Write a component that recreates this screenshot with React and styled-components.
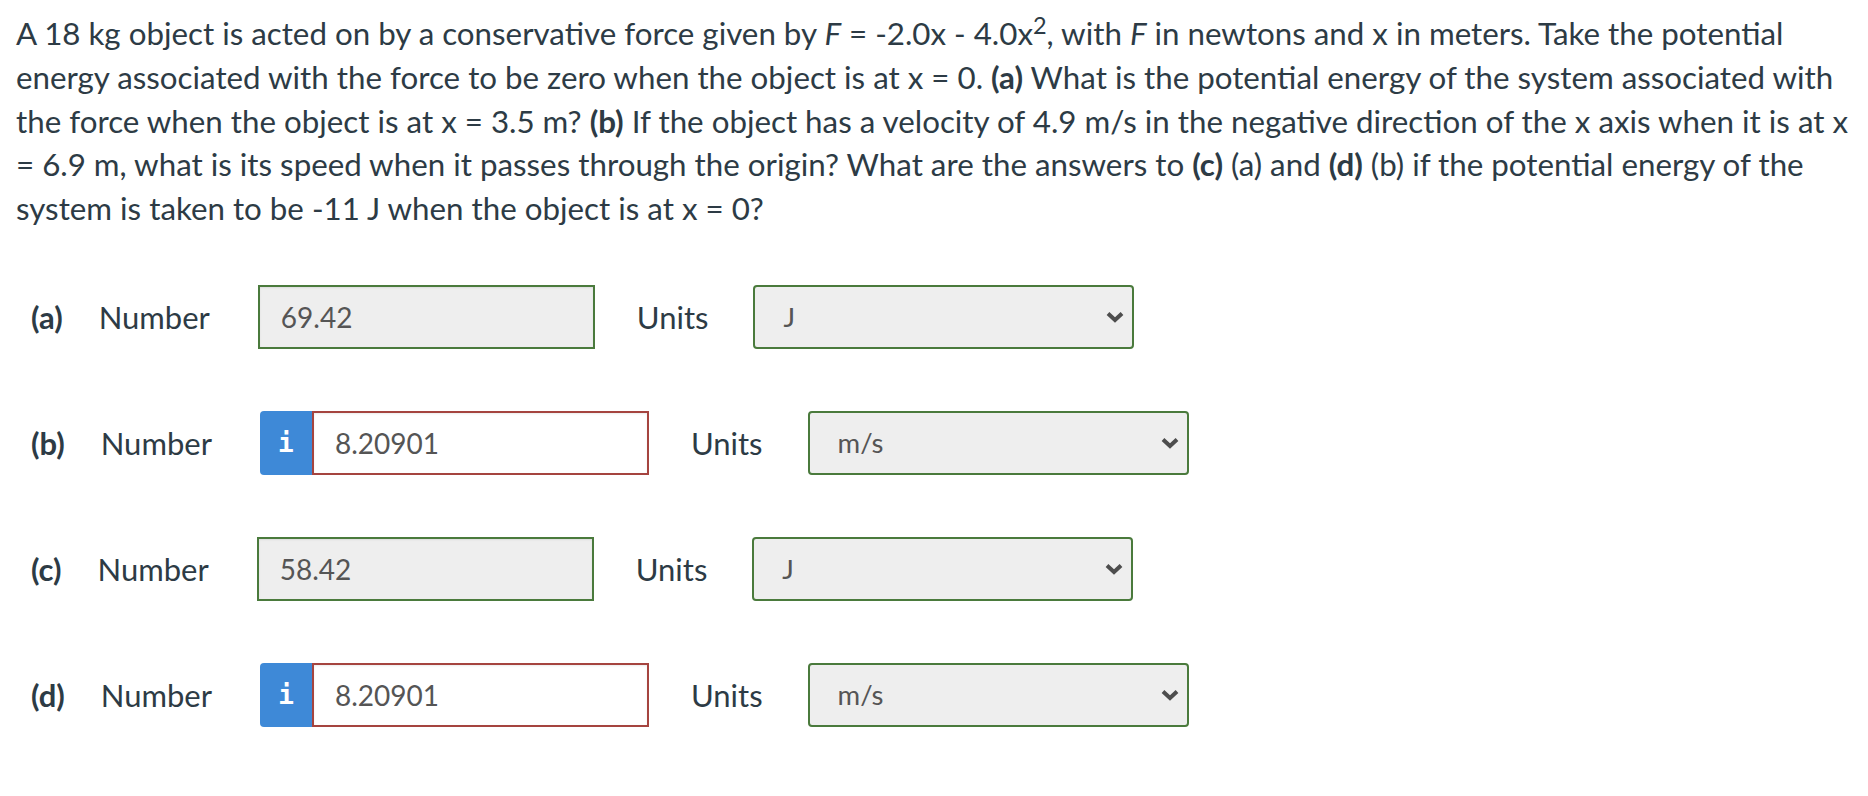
import React from "react";
import styled, { createGlobalStyle } from "styled-components";

const Global = createGlobalStyle`
  html, body { margin: 0; padding: 0; background: #ffffff; }
  body { font-family: Lato, "Open Sans", sans-serif; color: #2d3b45; }
`;

const Page = styled.main`
  padding: 12px 16px 0 16px;
`;

const Question = styled.p`
  margin: 0;
  font-size: 31.3px;
  line-height: 43.8px;
  white-space: nowrap;
  b { font-weight: 700; }
  i { font-style: italic; }
  sup { font-size: 0.75em; line-height: 0; vertical-align: 0.45em; }
`;

const Answers = styled.section`
  display: flex;
  flex-direction: column;
  gap: 62px;
  margin-top: 54px;
  padding-left: 15px;
`;

const Row = styled.div`
  display: flex;
  align-items: center;
  height: 64px;
  font-size: 31px;
`;

const PartLabel = styled.span`
  font-weight: 700;
  margin-right: 36px;
`;

const FieldLabel = styled.span`
  margin-right: ${(p) => p.$gap}px;
`;

const InputGroup = styled.div`
  display: flex;
  height: 64px;
  margin-right: 42px;
`;

const InfoButton = styled.span`
  width: 52px;
  height: 100%;
  box-sizing: border-box;
  display: flex;
  align-items: center;
  justify-content: center;
  background: #3e89d7;
  border-radius: 4px 0 0 4px;
  color: #ffffff;
  font-family: "DejaVu Sans Mono", monospace;
  font-weight: 700;
  font-size: 26px;
`;

const NumberField = styled.div`
  width: 337px;
  height: 100%;
  box-sizing: border-box;
  display: flex;
  align-items: center;
  padding-left: 21px;
  border: 2px solid ${(p) => (p.$correct ? "#4a7a3c" : "#a5443f")};
  background: ${(p) => (p.$correct ? "#eeeeee" : "#ffffff")};
  box-shadow: inset 0 1px 2px rgba(0, 0, 0, 0.08);
  font-size: 28px;
  color: #555555;
`;

const SelectBox = styled.div`
  width: 381px;
  height: 64px;
  box-sizing: border-box;
  display: flex;
  align-items: center;
  justify-content: space-between;
  padding: 0 8px 0 28px;
  border: 2px solid #4a7a3c;
  border-radius: 4px;
  background: #eeeeee;
  font-size: 27.5px;
  color: #555555;
`;

const Chevron = () => (
  <svg width="18" height="12" viewBox="0 0 18 12" aria-hidden="true">
    <polyline
      points="2,2.5 9,9 16,2.5"
      fill="none"
      stroke="#4d4d4d"
      strokeWidth="4"
      strokeLinecap="butt"
      strokeLinejoin="miter"
    />
  </svg>
);

const answers = [
  { part: "(a)", value: "69.42", correct: true, unit: "J" },
  { part: "(b)", value: "8.20901", correct: false, unit: "m/s" },
  { part: "(c)", value: "58.42", correct: true, unit: "J" },
  { part: "(d)", value: "8.20901", correct: false, unit: "m/s" },
];

export default function App() {
  return (
    <Page>
      <Global />
      <Question>
        A 18 kg object is acted on by a conservative force given by <i>F</i> = -2.0x - 4.0x<sup>2</sup>, with <i>F</i> in newtons and x in meters. Take the potential
        <br />
        energy associated with the force to be zero when the object is at x = 0. <b>(a)</b> What is the potential energy of the system associated with
        <br />
        the force when the object is at x = 3.5 m? <b>(b)</b> If the object has a velocity of 4.9 m/s in the negative direction of the x axis when it is at x
        <br />
        = 6.9 m, what is its speed when it passes through the origin? What are the answers to <b>(c)</b> (a) and <b>(d)</b> (b) if the potential energy of the
        <br />
        system is taken to be -11 J when the object is at x = 0?
      </Question>
      <Answers>
        {answers.map((a) => (
          <Row key={a.part}>
            <PartLabel>{a.part}</PartLabel>
            <FieldLabel $gap={48}>Number</FieldLabel>
            <InputGroup>
              {!a.correct && <InfoButton>i</InfoButton>}
              <NumberField $correct={a.correct}>{a.value}</NumberField>
            </InputGroup>
            <FieldLabel $gap={45}>Units</FieldLabel>
            <SelectBox>
              <span>{a.unit}</span>
              <Chevron />
            </SelectBox>
          </Row>
        ))}
      </Answers>
    </Page>
  );
}
